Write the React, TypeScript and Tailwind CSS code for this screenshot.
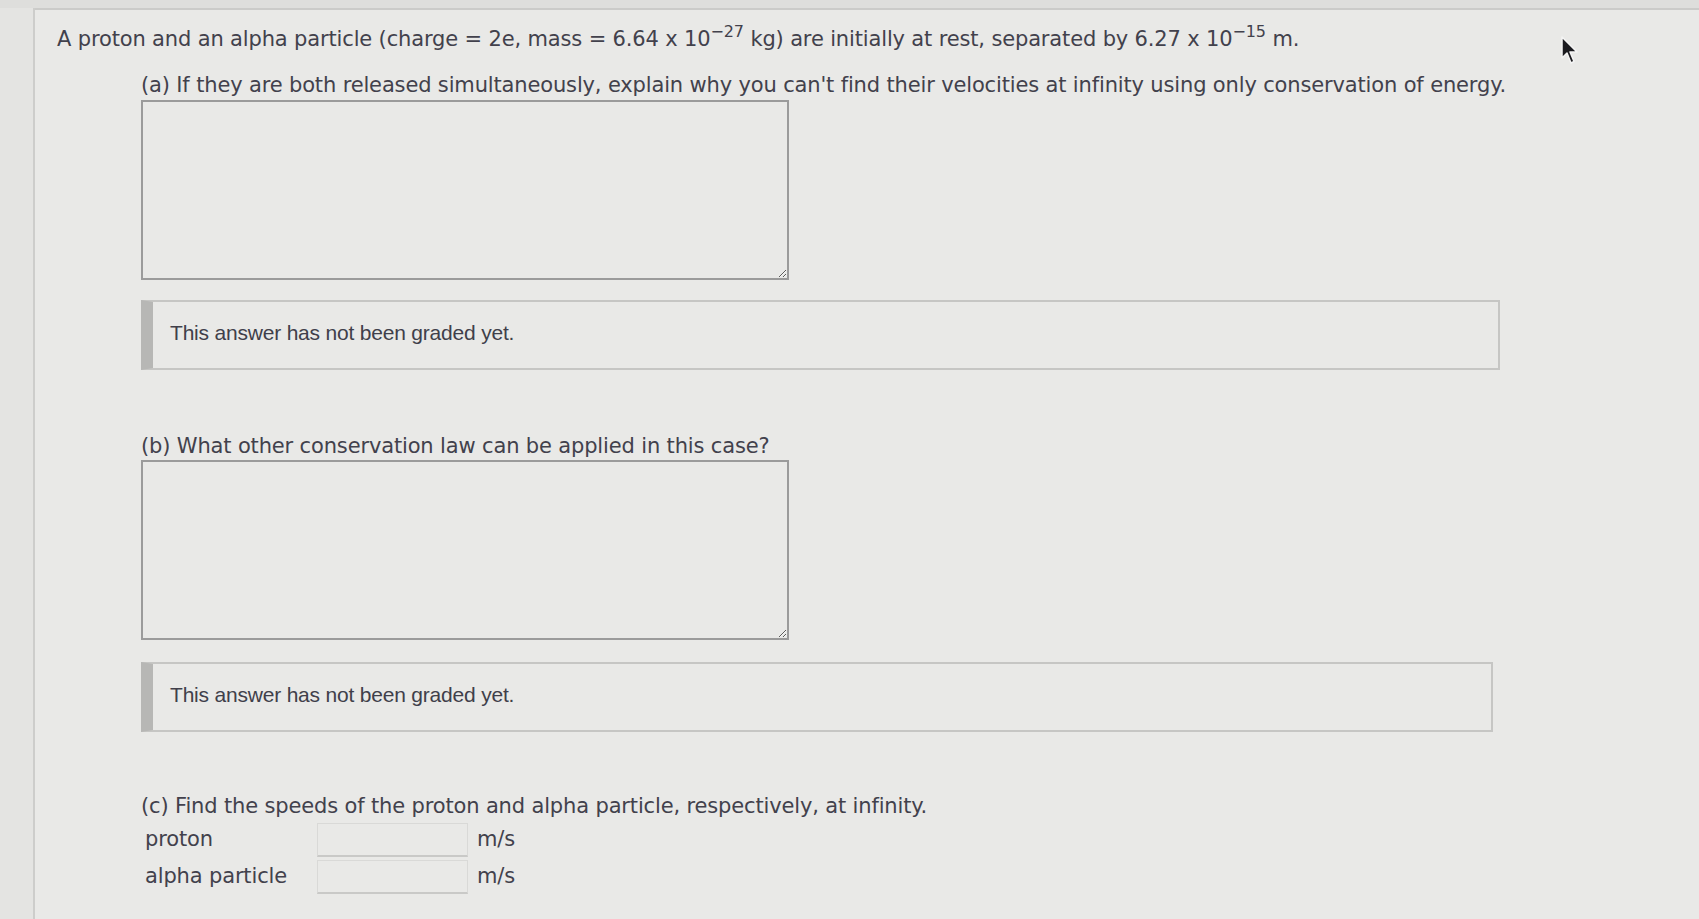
import React from 'react';

const Graded: React.FC<{ width: string }> = ({ width }) => (
    <div className={`${width} h-[70px] flex items-center border-2 border-l-[12px] border-[#c6c6c4] border-l-[#b7b7b5]`}>
        <p className="pl-[17px] pb-[5px] text-[21px] tracking-[-0.2px] text-[#403f4a]" style={{ fontFamily: '"Liberation Sans", Arial, sans-serif' }}>
            This answer has not been graded yet.
        </p>
    </div>
);

const Answer: React.FC = () => (
    <textarea className="block w-[648px] h-[180px] bg-transparent border-2 border-[#9b9b9b] outline-none" />
);

const Pointer: React.FC = () => (
    <svg className="absolute left-[1560px] top-[36px]" width="20" height="30" viewBox="0 0 20 30">
        <path d="M2 1 L2 22 L7 17 L11 27 L14 25.5 L10 16 L17 16 Z" fill="#1b1b1f" stroke="#f4f4f4" strokeWidth="1.5" strokeLinejoin="round" />
    </svg>
);

const App: React.FC = () => {
    return (
        <div className="relative w-[1699px] h-[919px] overflow-hidden bg-[#dededc] flex" style={{ fontFamily: '"DejaVu Sans", Verdana, sans-serif' }}>
            <div className="w-[35px] shrink-0 mt-[8px] bg-[#e4e4e2] border-r-2 border-[#cdcdcb]" />

            <div className="flex-1 mt-[8px] border-t-2 border-[#cbcbc9] bg-[#e9e9e7] pl-[22px] pt-[14px] text-[21px] tracking-[-0.15px] text-[#42414c]">
                <p className="leading-[30px]">
                    A proton and an alpha particle (charge = 2e, mass = 6.64 x 10<sup className="text-[16px] relative -top-[9px]">−27</sup> kg) are initially at rest, separated by 6.27 x 10<sup className="text-[16px] relative -top-[9px]">−15</sup> m.
                </p>

                <div className="ml-[84px]">
                    <p className="mt-[18px] leading-[26px]">
                        (a) If they are both released simultaneously, explain why you can't find their velocities at infinity using only conservation of energy.
                    </p>
                    <div className="mt-[2px]">
                        <Answer />
                    </div>
                    <div className="mt-[20px]">
                        <Graded width="w-[1359px]" />
                    </div>

                    <p className="mt-[63px] leading-[26px]">
                        (b) What other conservation law can be applied in this case?
                    </p>
                    <div className="mt-[1px]">
                        <Answer />
                    </div>
                    <div className="mt-[22px]">
                        <Graded width="w-[1352px]" />
                    </div>

                    <p className="mt-[61px] leading-[26px]">
                        (c) Find the speeds of the proton and alpha particle, respectively, at infinity.
                    </p>
                    <div className="mt-[4px] flex flex-col gap-[3px]">
                        <div className="flex items-center">
                            <span className="w-[176px] pl-[4px]">proton</span>
                            <div className="w-[151px] h-[34px] border border-[#d9d9d7] border-b-2 border-b-[#c9c9c7]" />
                            <span className="ml-[9px]">m/s</span>
                        </div>
                        <div className="flex items-center">
                            <span className="w-[176px] pl-[4px]">alpha particle</span>
                            <div className="w-[151px] h-[34px] border border-[#d9d9d7] border-b-2 border-b-[#c9c9c7]" />
                            <span className="ml-[9px]">m/s</span>
                        </div>
                    </div>
                </div>
            </div>

            <Pointer />
        </div>
    );
};

export default App;
